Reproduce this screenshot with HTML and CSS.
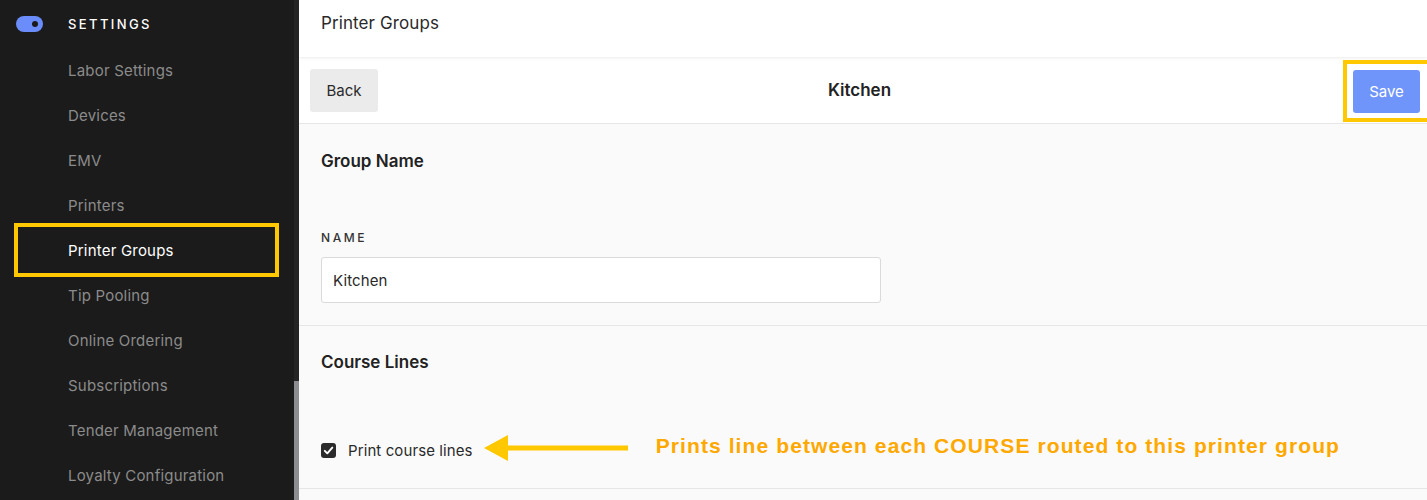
FILE: index.html
```html
<!DOCTYPE html>
<html lang="en">
<head>
<meta charset="utf-8">
<title>Printer Groups</title>
<link rel="stylesheet" href="styles.css">
</head>
<body>
<div class="app">
  <aside class="sidebar">
    <div class="nav">
      <div class="nav-head">
        <span class="toggle"><span class="toggle-dot"></span></span>
        <span class="nav-title">SETTINGS</span>
      </div>
      <div class="nav-item">Labor Settings</div>
      <div class="nav-item">Devices</div>
      <div class="nav-item">EMV</div>
      <div class="nav-item">Printers</div>
      <div class="nav-item active">Printer Groups</div>
      <div class="nav-item">Tip Pooling</div>
      <div class="nav-item">Online Ordering</div>
      <div class="nav-item">Subscriptions</div>
      <div class="nav-item">Tender Management</div>
      <div class="nav-item">Loyalty Configuration</div>
    </div>
    <div class="scroll-track"><div class="scroll-thumb"></div></div>
  </aside>
  <main class="main">
    <header class="topbar">Printer Groups</header>
    <div class="toolbar">
      <button class="btn btn-back">Back</button>
      <div class="toolbar-title">Kitchen</div>
      <span class="save-mark"><button class="btn btn-save">Save</button></span>
    </div>
    <section class="section section-name">
      <h2 class="section-title">Group Name</h2>
      <label class="field-label">NAME</label>
      <div class="input">Kitchen</div>
    </section>
    <section class="section section-course">
      <h2 class="section-title">Course Lines</h2>
      <div class="check-row">
        <span class="checkbox">
          <svg viewBox="0 0 15 15" width="15" height="15"><path d="M3.8 7.8 L6.3 10.3 L11.3 4.6" fill="none" stroke="#fff" stroke-width="1.9" stroke-linecap="round" stroke-linejoin="round"/></svg>
        </span>
        <span class="check-label">Print course lines</span>
        <svg class="arrow" viewBox="0 0 146 26" width="146" height="26"><polygon points="0,13 24,0 24,26" fill="#ffc800"/><rect x="22" y="10.5" width="122" height="5" fill="#ffc800"/></svg>
        <span class="note">Prints line between each COURSE routed to this printer group</span>
      </div>
    </section>
  </main>
</div>
</body>
</html>
```

FILE: styles.css
```css
* { box-sizing: border-box; }
html, body { margin: 0; padding: 0; }
body {
  font-family: Inter, "Liberation Sans", Arial, sans-serif;
  background: #fafafa;
  color: #2a2a2a;
  overflow: hidden;
}
.app {
  display: flex;
  height: 500px;
}
.sidebar {
  width: 299px;
  flex: none;
  background: #1b1b1b;
  display: flex;
}
.nav {
  flex: 1;
  padding-top: 2px;
}
.nav-head {
  height: 46px;
  display: flex;
  align-items: center;
  padding-left: 16px;
  padding-bottom: 2px;
}
.toggle {
  width: 27px;
  height: 16px;
  border-radius: 8px;
  background: #6b8dfb;
  position: relative;
  display: inline-block;
}
.toggle-dot {
  position: absolute;
  right: 5px;
  top: 5px;
  width: 6px;
  height: 6px;
  border-radius: 50%;
  background: #1b1b1b;
}
.nav-title {
  margin-left: 25px;
  color: #fff;
  font-size: 13px;
  font-weight: 500;
  letter-spacing: 2.4px;
}
.nav-item {
  height: 45px;
  display: flex;
  align-items: center;
  padding-left: 68px;
  color: #8b8b8b;
  font-size: 15px;
  letter-spacing: 0.2px;
  position: relative;
}
.nav-item.active {
  color: #fff;
}
.nav-item.active::after {
  content: "";
  position: absolute;
  left: 14px;
  right: 15px;
  top: -5px;
  bottom: -4px;
  border: 4px solid #ffc800;
}
.scroll-track {
  width: 5px;
  background: #242424;
  display: flex;
  flex-direction: column;
  justify-content: flex-end;
}
.scroll-thumb {
  height: 119px;
  background: #8b8d90;
}
.main {
  flex: 1;
  display: flex;
  flex-direction: column;
  min-width: 0;
}
.topbar {
  height: 57px;
  background: #fff;
  padding: 13px 22px 0;
  font-size: 17px;
  color: #2a2a2a;
  letter-spacing: 0.1px;
  box-shadow: 0 1px 3px rgba(0,0,0,0.08);
  position: relative;
  z-index: 1;
}
.toolbar {
  height: 67px;
  background: #fff;
  border-bottom: 1px solid #e6e6e6;
  display: grid;
  grid-template-columns: 1fr auto 1fr;
  align-items: center;
  padding: 0 0 0 11px;
}
.btn {
  font-family: inherit;
  font-size: 15px;
  border: none;
  border-radius: 3px;
  height: 43px;
  cursor: pointer;
}
.btn-back {
  justify-self: start;
  width: 68px;
  background: #ebebeb;
  color: #2a2a2a;
}
.save-mark {
  justify-self: end;
  display: flex;
  border: 4px solid #ffc800;
  border-right-width: 0;
  padding: 6px 7px 5px 6px;
  margin-top: 1px;
}
.btn-save {
  width: 67px;
  background: #6f95fb;
  color: #fff;
}
.toolbar-title {
  font-size: 17px;
  font-weight: 600;
  color: #222;
  margin-right: 18px;
}
.section {
  padding: 0 22px;
  border-bottom: 1px solid #e6e6e6;
  background: #fafafa;
}
.section-title {
  margin: 0;
  font-size: 17px;
  font-weight: 600;
  color: #222;
  letter-spacing: 0;
}
.section-name {
  padding-top: 27px;
  height: 202px;
}
.field-label {
  display: block;
  margin-top: 59px;
  font-size: 12px;
  letter-spacing: 2.6px;
  color: #333;
  font-weight: 500;
}
.input {
  margin-top: 12px;
  width: 560px;
  height: 46px;
  background: #fff;
  border: 1px solid #dadada;
  border-radius: 3px;
  padding: 0 11px;
  display: flex;
  align-items: center;
  font-size: 15px;
  color: #2a2a2a;
  letter-spacing: 0.1px;
}
.section-course {
  padding-top: 26px;
  height: 163px;
}
.check-row {
  margin-top: 65px;
  display: flex;
  align-items: center;
  height: 26px;
}
.checkbox {
  width: 15px;
  height: 15px;
  border-radius: 3px;
  background: #2b2b2b;
  display: inline-flex;
  flex: none;
}
.check-label {
  margin-left: 12px;
  font-size: 15px;
  color: #2a2a2a;
  letter-spacing: 0.1px;
}
.arrow {
  margin-left: 11px;
  flex: none;
  margin-top: -4px;
}
.note {
  margin-left: 26px;
  font-family: "Liberation Sans", Arial, sans-serif;
  font-weight: 700;
  font-size: 21px;
  color: #ffa800;
  letter-spacing: 1.1px;
  margin-top: -8px;
}
```
